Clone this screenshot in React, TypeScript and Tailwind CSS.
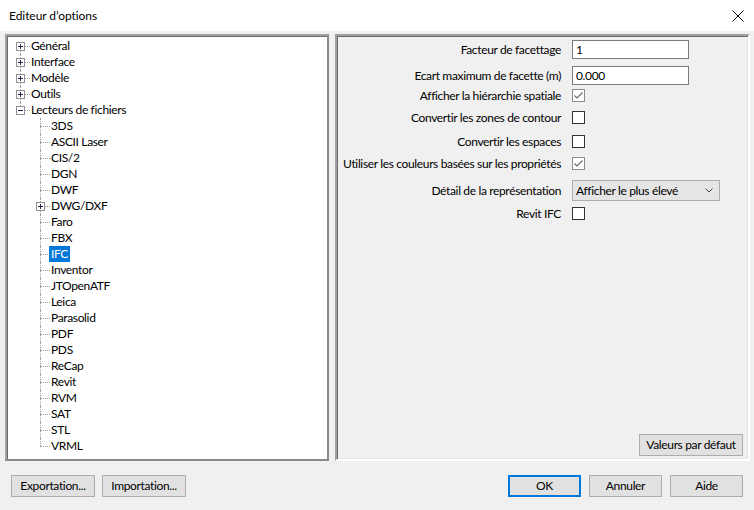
import React from 'react'

type Item = { label: string; level: 0 | 1; exp?: 'plus' | 'minus'; first?: boolean; last?: boolean; selected?: boolean }

const items: Item[] = [
  { label: 'Général', level: 0, exp: 'plus', first: true },
  { label: 'Interface', level: 0, exp: 'plus' },
  { label: 'Modèle', level: 0, exp: 'plus' },
  { label: 'Outils', level: 0, exp: 'plus' },
  { label: 'Lecteurs de fichiers', level: 0, exp: 'minus', last: true },
  ...['3DS', 'ASCII Laser', 'CIS/2', 'DGN', 'DWF', 'DWG/DXF', 'Faro', 'FBX', 'IFC', 'Inventor', 'JTOpenATF', 'Leica', 'Parasolid', 'PDF', 'PDS', 'ReCap', 'Revit', 'RVM', 'SAT', 'STL', 'VRML'].map(
    (label, i, arr): Item => ({
      label,
      level: 1,
      exp: label === 'DWG/DXF' ? 'plus' : undefined,
      last: i === arr.length - 1,
      selected: label === 'IFC',
    })
  ),
]

function Expander({ kind }: { kind: 'plus' | 'minus' }) {
  return (
    <span className="relative z-10 w-[9px] h-[9px] border border-[#919191] bg-white flex items-center justify-center">
      <span className="absolute w-[5px] h-px bg-[#1f2a44]" />
      {kind === 'plus' && <span className="absolute w-px h-[5px] bg-[#1f2a44]" />}
    </span>
  )
}

// one 20px gutter cell holding the dotted tree lines
function Gutter({ item }: { item: Item }) {
  return (
    <span className="relative w-[20px] h-4 shrink-0 flex items-center justify-center">
      <span
        className={
          'absolute left-[10px] w-0 border-l border-dotted border-[#a0a0a0] ' +
          (item.first ? 'top-2 bottom-0' : item.last ? 'top-0 h-2' : 'top-0 bottom-0')
        }
      />
      <span className="absolute left-[10px] right-0 top-2 h-0 border-t border-dotted border-[#a0a0a0]" />
      {item.exp && <Expander kind={item.exp} />}
    </span>
  )
}

function TreeRow({ item }: { item: Item }) {
  return (
    <div className="h-4 flex items-center">
      {item.level === 1 && <span className="w-[20px] shrink-0" />}
      <Gutter item={item} />
      <span
        className={
          'ml-[-1px] px-[2px] h-4 leading-4 whitespace-nowrap ' + (item.selected ? 'bg-[#0078d7] text-white' : 'text-black')
        }
      >
        {item.label}
      </span>
    </div>
  )
}

function Checkbox({ checked }: { checked?: boolean }) {
  return (
    <span
      className={
        'w-[13px] h-[13px] bg-white border flex items-center justify-center ' +
        (checked ? 'border-[#8c8c8c]' : 'border-[#333333]')
      }
    >
      {checked && (
        <svg width="11" height="11" viewBox="0 0 11 11">
          <polyline points="1.5,5.5 4,8 9.5,2.5" fill="none" stroke="#666" strokeWidth="1.1" />
        </svg>
      )}
    </span>
  )
}

function Row({ label, children, className }: { label: string; children: React.ReactNode; className: string }) {
  return (
    <div className={'flex items-center ' + className}>
      <span className="w-[224px] shrink-0 flex justify-end whitespace-nowrap">{label}</span>
      <span className="ml-[11px] flex items-center">{children}</span>
    </div>
  )
}

function Btn({ children, primary, className = '' }: { children: React.ReactNode; primary?: boolean; className?: string }) {
  return (
    <button
      className={
        'h-[22px] bg-[#e1e1e1] text-black flex items-center justify-center whitespace-nowrap ' +
        (primary ? 'border-2 border-[#0078d7] ' : 'border border-[#adadad] ') +
        className
      }
    >
      {children}
    </button>
  )
}

export default function App() {
  return (
    <div
      className="w-[754px] h-[510px] bg-[#f0f0f0] flex flex-col text-[12px] tracking-[-0.35px] text-black overflow-hidden"
      style={{ fontFamily: '"Segoe UI", Lato, "Noto Sans", sans-serif' }}
    >
      {/* Title bar */}
      <div className="h-[31px] bg-white flex items-center justify-between pl-[9px] pr-[10px] shrink-0">
        <span className="text-[12px] tracking-[-0.05px]">Editeur d’options</span>
        <svg width="12" height="12" viewBox="0 0 12 12">
          <path d="M0.5 0.5 L11.5 11.5 M11.5 0.5 L0.5 11.5" stroke="#000" strokeWidth="1" />
        </svg>
      </div>

      {/* Panels */}
      <div className="flex gap-[6px] pl-[5px] pr-[4px] pt-[3px]">
        <div className="w-[324px] h-[427px] bg-white border-2 border-t-[#a0a0a0] border-l-[#a0a0a0] border-r-[#8a8a8a] border-b-[#8a8a8a] shadow-[inset_1px_1px_0_#696969] pt-[2px] pl-[3px] overflow-hidden">
          {items.map((it) => (
            <TreeRow key={it.label} item={it} />
          ))}
        </div>

        <div className="flex-1 h-[427px] border-2 border-t-[#a0a0a0] border-l-[#a0a0a0] border-r-white border-b-white shadow-[inset_1px_1px_0_#696969,inset_-1px_-1px_0_#e3e3e3] flex flex-col pt-[4px]">
          <Row label="Facteur de facettage" className="h-[19px]">
            <span className="w-[117px] h-[19px] bg-white border border-[#7a7a7a] pl-[3px] leading-[17px]">1</span>
          </Row>
          <Row label="Ecart maximum de facette (m)" className="h-[19px] mt-[7px]">
            <span className="w-[117px] h-[19px] bg-white border border-[#7a7a7a] pl-[3px] leading-[17px]">0.000</span>
          </Row>
          <Row label="Afficher la hiérarchie spatiale" className="h-[13px] mt-[4px]">
            <Checkbox checked />
          </Row>
          <Row label="Convertir les zones de contour" className="h-[13px] mt-[9px]">
            <Checkbox />
          </Row>
          <Row label="Convertir les espaces" className="h-[13px] mt-[11px]">
            <Checkbox />
          </Row>
          <Row label="Utiliser les couleurs basées sur les propriétés" className="h-[13px] mt-[9px]">
            <Checkbox checked />
          </Row>
          <Row label="Détail de la représentation" className="h-[21px] mt-[10px]">
            <span className="w-[148px] h-[21px] bg-[#e5e5e5] border border-[#adadad] pl-[3px] pr-[6px] flex items-center justify-between">
              <span>Afficher le plus élevé</span>
              <svg width="8" height="5" viewBox="0 0 8 5">
                <polyline points="0.5,0.5 4,4 7.5,0.5" fill="none" stroke="#444" strokeWidth="1" />
              </svg>
            </span>
          </Row>
          <Row label="Revit IFC" className="h-[13px] mt-[6px]">
            <Checkbox />
          </Row>

          <div className="mt-auto flex justify-end pr-[5px] pb-[3px]">
            <Btn className="w-[104px] h-[21px]">Valeurs par défaut</Btn>
          </div>
        </div>
      </div>

      {/* Bottom buttons */}
      <div className="flex items-center px-[11px] mt-[14px]">
        <Btn className="w-[84px]">Exportation...</Btn>
        <Btn className="w-[84px] ml-[7px]">Importation...</Btn>
        <div className="flex-1" />
        <Btn primary className="w-[73px]">OK</Btn>
        <Btn className="w-[73px] ml-[8px]">Annuler</Btn>
        <Btn className="w-[73px] ml-[8px]">Aide</Btn>
      </div>
    </div>
  )
}
